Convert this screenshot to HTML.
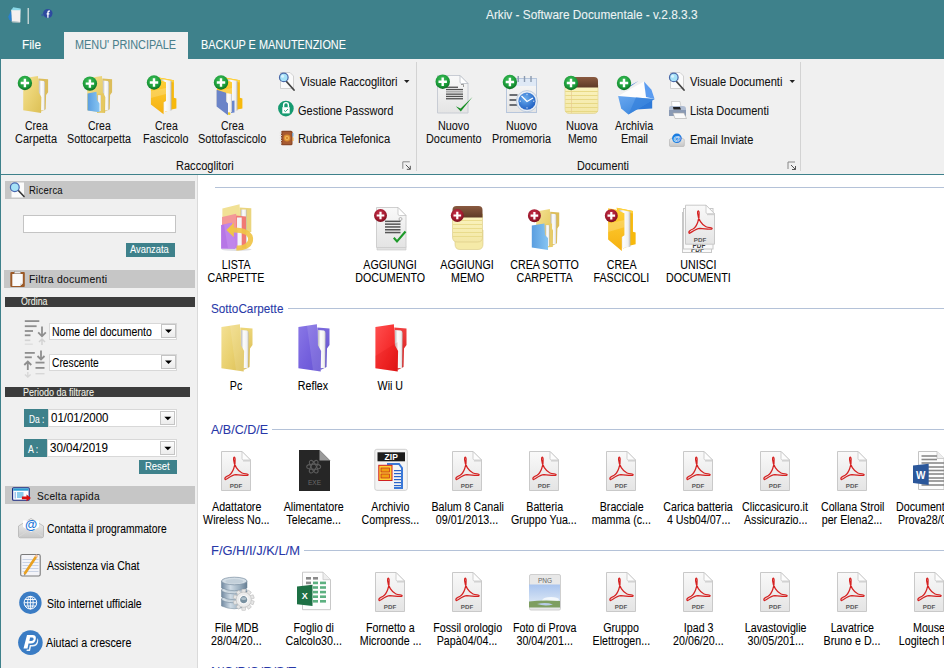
<!DOCTYPE html>
<html><head><meta charset="utf-8">
<style>
*{margin:0;padding:0;box-sizing:border-box}
html,body{width:944px;height:668px;overflow:hidden;background:#fff}
body{position:relative;font-family:"Liberation Sans",sans-serif}
.a{position:absolute}
.t{position:absolute;white-space:nowrap;-webkit-text-stroke:.07px currentColor}
</style></head><body>
<div class="a" style="left:0px;top:0px;width:944px;height:59px;background:#3e818b;"></div>
<div class="a" style="left:64px;top:32px;width:124px;height:27px;background:#f0f0f0;"></div>
<div class="a" style="left:1px;top:59px;width:943px;height:115px;background:#f0f0f0;"></div>
<div class="a" style="left:0px;top:174px;width:944px;height:1px;background:#3e818b;"></div>
<div class="a" style="left:0px;top:59px;width:1px;height:609px;background:#3e818b;"></div>
<div class="a" style="left:1px;top:175px;width:196px;height:493px;background:#f0f0f0;"></div>
<div class="a" style="left:197px;top:175px;width:1px;height:493px;background:#dadada;"></div>
<div class="a" style="left:198px;top:175px;width:746px;height:493px;background:#fff;"></div>
<div class="a" style="left:416px;top:62px;width:1px;height:109px;background:#d3d3d3;"></div>
<div class="a" style="left:800px;top:62px;width:1px;height:109px;background:#d3d3d3;"></div>
<div class="a" style="left:5px;top:181px;width:190px;height:18px;background:#c6c6c6;"></div>
<div class="a" style="left:23px;top:215px;width:153px;height:18px;background:#fff;border:1px solid #c4c4c4;box-sizing:border-box"></div>
<div class="a" style="left:126px;top:243px;width:49px;height:14px;background:#3e818b;"></div>
<div class="a" style="left:4px;top:270px;width:191px;height:17.5px;background:#c6c6c6;"></div>
<div class="a" style="left:5px;top:297px;width:190px;height:9.5px;background:#3c3c3c;"></div>
<div class="a" style="left:49px;top:322.6px;width:128px;height:17px;background:#fff;border:1px solid #d8d8d8;box-sizing:border-box"></div>
<div class="a" style="left:161px;top:324px;width:15px;height:14px;background:linear-gradient(#fdfdfd,#ececec);border:1px solid #c4c4c4;box-sizing:border-box"></div>
<div class="a" style="left:49px;top:353.6px;width:128px;height:17px;background:#fff;border:1px solid #d8d8d8;box-sizing:border-box"></div>
<div class="a" style="left:161px;top:355px;width:15px;height:14px;background:linear-gradient(#fdfdfd,#ececec);border:1px solid #c4c4c4;box-sizing:border-box"></div>
<div class="a" style="left:5px;top:387px;width:185px;height:10px;background:#3c3c3c;"></div>
<div class="a" style="left:24px;top:409px;width:24px;height:18px;background:#3e818b;"></div>
<div class="a" style="left:48px;top:409px;width:128.5px;height:18px;background:#fff;border:1px solid #d8d8d8;box-sizing:border-box"></div>
<div class="a" style="left:160.3px;top:411.3px;width:15px;height:14px;background:linear-gradient(#fdfdfd,#ececec);border:1px solid #c4c4c4;box-sizing:border-box"></div>
<div class="a" style="left:24px;top:439px;width:23px;height:17.5px;background:#3e818b;"></div>
<div class="a" style="left:47px;top:439px;width:129.5px;height:17.5px;background:#fff;border:1px solid #d8d8d8;box-sizing:border-box"></div>
<div class="a" style="left:160.3px;top:441.3px;width:15px;height:14px;background:linear-gradient(#fdfdfd,#ececec);border:1px solid #c4c4c4;box-sizing:border-box"></div>
<div class="a" style="left:139px;top:460px;width:38px;height:14px;background:#3e818b;"></div>
<div class="a" style="left:5px;top:486px;width:190px;height:17.5px;background:#c6c6c6;"></div>
<div class="a" style="left:215px;top:187px;width:729px;height:1px;background:#b4c2d8;"></div>
<div class="a" style="left:288px;top:308px;width:656px;height:1px;background:#b4c2d8;"></div>
<div class="a" style="left:272px;top:429px;width:672px;height:1px;background:#b4c2d8;"></div>
<div class="a" style="left:304px;top:550px;width:640px;height:1px;background:#b4c2d8;"></div>
<svg class="a" style="left:0;top:0" width="944" height="668"><defs>
<linearGradient id="gPage" x1="0" y1="0" x2="0" y2="1"><stop offset="0" stop-color="#f9f9f9"/><stop offset="1" stop-color="#e4e4e4"/></linearGradient>
<linearGradient id="gPageH" x1="0" y1="0" x2="1" y2="0"><stop offset="0" stop-color="#ececec"/><stop offset=".5" stop-color="#fbfbfb"/><stop offset="1" stop-color="#e2e2e2"/></linearGradient>
<linearGradient id="gPaper" x1="0" y1="0" x2="1" y2="0"><stop offset="0" stop-color="#bdbdbd"/><stop offset=".35" stop-color="#fdfdfd"/><stop offset=".8" stop-color="#f0f0f0"/><stop offset="1" stop-color="#b8b8b8"/></linearGradient>
<linearGradient id="gFY" x1="0" y1="0" x2="1" y2="1"><stop offset="0" stop-color="#f4e195"/><stop offset=".5" stop-color="#ead272"/><stop offset="1" stop-color="#dcbf55"/></linearGradient>
<linearGradient id="gFYb" x1="0" y1="0" x2="0" y2="1"><stop offset="0" stop-color="#ecd679"/><stop offset="1" stop-color="#d6b54a"/></linearGradient>
<linearGradient id="gFP" x1="0" y1="0" x2="1" y2="1"><stop offset="0" stop-color="#8a78e6"/><stop offset=".5" stop-color="#7662de"/><stop offset="1" stop-color="#6552d2"/></linearGradient>
<linearGradient id="gFPb" x1="0" y1="0" x2="0" y2="1"><stop offset="0" stop-color="#7a68dc"/><stop offset="1" stop-color="#5e4ec8"/></linearGradient>
<linearGradient id="gFR" x1="0" y1="0" x2="1" y2="1"><stop offset="0" stop-color="#ff5050"/><stop offset=".6" stop-color="#f52a2a"/><stop offset="1" stop-color="#e01818"/></linearGradient>
<linearGradient id="gFRb" x1="0" y1="0" x2="0" y2="1"><stop offset="0" stop-color="#f04040"/><stop offset="1" stop-color="#d01a1a"/></linearGradient>
<linearGradient id="gFO" x1="0" y1="0" x2="0" y2="1"><stop offset="0" stop-color="#ffd23a"/><stop offset="1" stop-color="#f5b010"/></linearGradient>
<linearGradient id="gFB" x1="0" y1="0" x2="1" y2="0"><stop offset="0" stop-color="#5a9ee0"/><stop offset="1" stop-color="#86c4f2"/></linearGradient>
<radialGradient id="gGreen" cx=".45" cy=".35" r=".65"><stop offset="0" stop-color="#3fc15a"/><stop offset=".7" stop-color="#1a9a38"/><stop offset="1" stop-color="#0e6e24"/></radialGradient>
<radialGradient id="gRed" cx=".45" cy=".35" r=".65"><stop offset="0" stop-color="#c8304a"/><stop offset=".7" stop-color="#9e1a2e"/><stop offset="1" stop-color="#7a0e1e"/></radialGradient>
<linearGradient id="gMemo" x1="0" y1="0" x2="0" y2="1"><stop offset="0" stop-color="#fbf4c0"/><stop offset="1" stop-color="#f3e7a6"/></linearGradient>
<linearGradient id="gBrown" x1="0" y1="0" x2="0" y2="1"><stop offset="0" stop-color="#8a5a40"/><stop offset="1" stop-color="#5e3a26"/></linearGradient>
<radialGradient id="gClock" cx=".4" cy=".35" r=".7"><stop offset="0" stop-color="#6aaef0"/><stop offset="1" stop-color="#1d5cc0"/></radialGradient>
<linearGradient id="gSky" x1="0" y1="0" x2="0" y2="1"><stop offset="0" stop-color="#a9c4ee"/><stop offset=".7" stop-color="#d4e2f4"/><stop offset="1" stop-color="#e8eef6"/></linearGradient>
<linearGradient id="gDB" x1="0" y1="0" x2="1" y2="0"><stop offset="0" stop-color="#7088a0"/><stop offset=".35" stop-color="#d0dce6"/><stop offset=".7" stop-color="#9cb0c0"/><stop offset="1" stop-color="#667e94"/></linearGradient>

<!-- plus badges (origin = center) -->
<g id="plusG"><circle r="7.2" fill="url(#gGreen)"/><path d="M0 -4.2V4.2M-4.2 0H4.2" stroke="#fff" stroke-width="2.4"/></g>
<g id="plusR"><circle r="6.5" fill="url(#gRed)"/><path d="M0 -3.8V3.8M-3.8 0H3.8" stroke="#fff" stroke-width="2.2"/></g>

<!-- folder: origin at (216,320) frame, 42x56 -->
<g id="folderY">
 <path d="M24.3 7.5L36.5 8.4V25L34 28.5L33.5 47L28.5 49.5L24.3 49Z" fill="url(#gFYb)"/>
 <path d="M25 10L31 10.5Q32.6 11 32.6 13L32.2 48L25 48.5Z" fill="url(#gPaper)"/>
 <path d="M5.4 7.1L23.9 4.2L24.7 25.1L28.1 31L27.7 51.6L5.4 48.2Z" fill="url(#gFY)"/>
 <path d="M14 5.8L23.9 4.2L24.7 25.1L28.1 31L27.7 51.6L20 50.4Z" fill="#fff" opacity=".12"/>
</g>
<g id="folderP">
 <path d="M24.3 7.5L36.5 8.4V25L34 28.5L33.5 47L28.5 49.5L24.3 49Z" fill="url(#gFPb)"/>
 <path d="M25 10L31 10.5Q32.6 11 32.6 13L32.2 48L25 48.5Z" fill="url(#gPaper)"/>
 <path d="M5.4 7.1L23.9 4.2L24.7 25.1L28.1 31L27.7 51.6L5.4 48.2Z" fill="url(#gFP)"/>
 <path d="M14 5.8L23.9 4.2L24.7 25.1L28.1 31L27.7 51.6L20 50.4Z" fill="#fff" opacity=".12"/>
</g>
<g id="folderR">
 <path d="M24.3 7.5L36.5 8.4V25L34 28.5L33.5 47L28.5 49.5L24.3 49Z" fill="url(#gFRb)"/>
 <path d="M25 10L31 10.5Q32.6 11 32.6 13L32.2 48L25 48.5Z" fill="url(#gPaper)"/>
 <path d="M5.4 7.1L23.9 4.2L24.7 25.1L28.1 31L27.7 51.6L5.4 48.2Z" fill="url(#gFR)"/>
 <path d="M5.4 36L27.7 22V51.6L5.4 48.2Z" fill="#c00" opacity=".15"/>
</g>

<!-- PDF page: origin page top-left, 30x40 -->
<g id="pdf">
 <path d="M0.5 0.5H21L29.5 9V39.5H0.5Z" fill="url(#gPage)" stroke="#c9c9c9"/>
 <path d="M21 0.5L29.5 9H22.5Q21 9 21 7.5Z" fill="#fdfdfd" stroke="#c4c4c4" stroke-width=".8"/>
 <path d="M22 9.2H29.3L29.3 10.5L22 10.5Z" fill="#cfcfcf"/>
 <path d="M4.3 28.6C2.8 27.2 5.3 25.2 8 24.3C12 22 14.6 14 14.1 8C13.9 5.4 12.3 5.6 12.6 8.6C13 14.2 16.6 20 21 22C24 23.4 27.6 22.6 27.1 24C26.6 25.4 21 24.1 15 23.6C10 24 6 28.3 4.3 28.6Z" fill="none" stroke="#d52222" stroke-width="1.25"/>
 <text x="15" y="37.3" font-family="Liberation Sans" font-weight="bold" font-size="6.2" text-anchor="middle" fill="#5a5a5a">PDF</text>
</g>
<linearGradient id="gEnvG" x1="0" y1="0" x2="0" y2="1"><stop offset="0" stop-color="#f6f6f6"/><stop offset="1" stop-color="#c6c6c6"/></linearGradient>
</defs>
<defs>
<g id="folderRib">
 <path d="M24.3 7.5L36.5 8.4V25L34 28.5L33.5 47L28.5 49.5L24.3 49Z" fill="#dcbd5a"/>
 <path d="M25 10L31 10.5Q32.6 11 32.6 13L32.2 48L25 48.5Z" fill="url(#gPaper)"/>
 <path d="M5.4 7.1L23.9 4.2L24.7 25.1L28.1 31L27.7 51.6L5.4 48.2Z" fill="url(#gFY)"/>
</g>
<g id="fascOr">
 <path d="M14.8 5.5L29.9 8.3V25.8L32.4 26.5V36.5L27.5 37.5L21 40Z" fill="#f7b90c"/>
 <path d="M14.8 5.5L29.9 8.3V10.5L16 8Z" fill="#ffd23c"/>
 <path d="M17.2 7L27.5 9V38.6L19 40Z" fill="url(#gPaper)"/>
 <path d="M6.9 6L14 7L22 10.3V28.9L19.6 30.3V42.3L6.9 32.4Z" fill="url(#gFO)"/>
 <path d="M6.9 19L22 16V22L6.9 26Z" fill="#fff" opacity=".2"/>
</g>
<linearGradient id="gEnv" x1="0" y1="0" x2="1" y2="1"><stop offset="0" stop-color="#6aa8f0"/><stop offset="1" stop-color="#2f7ed8"/></linearGradient>
<radialGradient id="gBlueC" cx=".4" cy=".35" r=".7"><stop offset="0" stop-color="#4a94d8"/><stop offset="1" stop-color="#2a6cb0"/></radialGradient>
</defs>
<use href="#folderRib" transform="translate(18.9,72.7) scale(0.8,0.78)"/>
<use href="#plusG" x="24.9" y="83"/>
<use href="#folderRib" transform="translate(82.9,72.7) scale(0.8,0.78)"/>
<path d="M97 94L104 93.5V112.5L97 113Z" fill="#e6c860"/>
<path d="M97.5 95L101 95.3V111L97.5 111.5Z" fill="url(#gPaper)"/>
<path d="M87.6 93.5L96.5 91.8L97 100L99.5 103.5V112.2L87.6 110.6Z" fill="url(#gFB)"/>
<use href="#plusG" x="89.9" y="83.6"/>
<use href="#fascOr" x="144" y="72"/>
<use href="#plusG" x="154" y="82.5"/>
<use href="#fascOr" x="210" y="72"/>
<path d="M231 101L234.5 100.5V112.5L231 113Z" fill="#6a86cc"/>
<path d="M225.5 93L232 94V112L226 113Z" fill="url(#gPaper)"/>
<path d="M216.6 89.8L226 92.8V101.5L228 103.5V115.2L216.6 106.5Z" fill="#6b84c8"/>
<circle cx="229.2" cy="113.8" r="1.3" fill="#f0d020"/>
<use href="#plusG" x="221" y="82.5"/>
<path d="M437.5 75.5H460L468 83.5V113H437.5Z" fill="url(#gPage)" stroke="#c8ccd4"/>
<path d="M460 75.5V82Q460 83.5 461.5 83.5H468Z" fill="#fff" stroke="#b8bcc4" stroke-width=".8"/>
<path d="M461 84.5H463.5V87" fill="none" stroke="#777" stroke-width=".7"/>
<rect x="446" y="86.6" width="12" height="1.3" fill="#505050"/><rect x="446" y="88.9" width="17" height="1.3" fill="#505050"/><rect x="446" y="91.2" width="17" height="1.3" fill="#a0a0a0"/><rect x="446" y="93.5" width="17" height="1.3" fill="#505050"/><rect x="446" y="95.8" width="17" height="1.3" fill="#505050"/><rect x="446" y="98.1" width="17" height="1.3" fill="#505050"/><path d="M455.8 106.2L460.8 111.6L472.5 97L460.6 108.6Z" fill="#1a9028"/>
<use href="#plusG" x="442.7" y="81.7"/>
<rect x="506.5" y="78.5" width="30" height="34" fill="url(#gPage)" stroke="#b7c6dc"/>
<rect x="507" y="79" width="29" height="7" fill="#dfe9f6"/>
<rect x="517.5" y="76" width="1.4" height="6" fill="#8a9ab0"/>
<rect x="523.8" y="76" width="1.4" height="6" fill="#8a9ab0"/>
<rect x="530.3" y="76" width="1.4" height="6" fill="#8a9ab0"/>
<rect x="509.5" y="94" width="8" height="2" fill="#6a6e74"/>
<rect x="509.5" y="99" width="8" height="2" fill="#6a6e74"/>
<rect x="509.5" y="104" width="8" height="2" fill="#6a6e74"/>
<circle cx="527" cy="101.2" r="10.6" fill="#e8eef6" stroke="#b4c4d8" stroke-width=".8"/>
<circle cx="527" cy="101.2" r="8.6" fill="url(#gClock)"/>
<path d="M521.5 96L527 101.5L533 98" fill="none" stroke="#fff" stroke-width="1.3"/><path d="M527 93.8V95.2M527 107.2V108.6M519.6 101.2H521M533 101.2H534.4" stroke="#dfe8f6" stroke-width="1"/>
<use href="#plusG" x="509.9" y="82"/>
<path d="M565 85H598V109Q598 113.5 593.5 113.5H569.5Q565 113.5 565 109Z" fill="url(#gMemo)" stroke="#ddd08a" stroke-width=".6"/>
<rect x="565.3" y="91" width="32.4" height="0.9" fill="#e6d680"/>
<rect x="565.3" y="95" width="32.4" height="0.9" fill="#e6d680"/>
<rect x="565.3" y="99" width="32.4" height="0.9" fill="#e6d680"/>
<rect x="565.3" y="103" width="32.4" height="0.9" fill="#e6d680"/>
<rect x="565.3" y="107" width="32.4" height="0.9" fill="#e6d680"/>
<rect x="565.3" y="111" width="32.4" height="0.9" fill="#e6d680"/>
<rect x="571" y="87" width=".8" height="26" fill="#e8c890" opacity=".8"/><path d="M565 87.5V81Q565 77 569 77H594Q598 77 598 81V87.5Z" fill="url(#gBrown)"/>
<use href="#plusG" x="571" y="83"/>
<path d="M620.5 91L638.4 80.9L631 86Z" fill="#2a6fd0"/>
<path d="M618.1 96L644 81.6L651.5 89.8L654.6 99.1L630 104Z" fill="#fdfdfd"/>
<path d="M644 81.6L651.5 89.8L654.6 99.1L646 97Z" fill="#5b9cf0"/>
<path d="M621.2 101L652.2 100V108.4L628.4 110Z" fill="#2f7ad8"/>
<path d="M618.1 96L654.6 99.1L628.4 114.6L621.2 108.4Z" fill="url(#gEnv)"/>
<path d="M636 97.5L654.6 99.1L628.4 114.6Z" fill="#3580dc" opacity=".7"/>
<use href="#plusG" x="624" y="83"/>
<path d="M280.5 72.5H290L293.5 76V88.5H280.5Z" fill="#fafafa" stroke="#c8c8c8" stroke-width=".8"/><path d="M286 81L294 90" stroke="#444" stroke-width="1.8" stroke-linecap="round"/><circle cx="283.8" cy="77.4" r="4.3" fill="#a6e2f8" stroke="#4a68a8" stroke-width="1.2"/><circle cx="282.6" cy="76.2" r="1.5" fill="#e8f8ff" opacity=".8"/>
<path d="M670.5 72.5H680L683.5 76V88.5H670.5Z" fill="#fafafa" stroke="#c8c8c8" stroke-width=".8"/><path d="M676 81L684 90" stroke="#444" stroke-width="1.8" stroke-linecap="round"/><circle cx="673.8" cy="77.4" r="4.3" fill="#a6e2f8" stroke="#4a68a8" stroke-width="1.2"/><circle cx="672.6" cy="76.2" r="1.5" fill="#e8f8ff" opacity=".8"/>
<path d="M404 80H409.5L406.75 83Z" fill="#222"/>
<path d="M789.5 80H795L792.25 83Z" fill="#222"/>
<circle cx="285.9" cy="108.6" r="7.8" fill="#169a70"/>
<rect x="282.3" y="107.2" width="7.4" height="6.2" fill="#fff"/>
<path d="M283.6 107.5V105.2Q283.6 102.6 286 102.6Q288.4 102.6 288.4 105.2V107.5" fill="none" stroke="#fff" stroke-width="1.4"/>
<path d="M284 110.3L285.5 111.6L288 109" fill="none" stroke="#169a70" stroke-width=".9"/>
<rect x="281" y="130.8" width="11.5" height="14.5" rx="1.5" fill="#8a4828"/>
<rect x="282.5" y="132" width="9" height="12" rx="1" fill="#a85a30"/>
<path d="M279.8 133H282M279.8 135.5H282M279.8 138H282M279.8 140.5H282M279.8 143H282" stroke="#d8d8d8" stroke-width=".9"/>
<rect x="292.4" y="133" width="1" height="3.5" fill="#5aa8e8"/><rect x="292.4" y="137.5" width="1" height="3.5" fill="#f0a030"/>
<circle cx="287" cy="138" r="3.4" fill="#d88a30"/>
<circle cx="287" cy="138" r="1.8" fill="none" stroke="#f6c060" stroke-width=".9"/>
<path d="M671.5 101.5H680L681 107H672Z" fill="#fff" stroke="#bbb" stroke-width=".6"/>
<path d="M669 108Q669 106 671 106H683Q686 106 686 109V115H669Z" fill="#b0bdd2"/>
<path d="M673 107H680L681 109.5H673.5Z" fill="#222"/>
<path d="M669 110H686V116H669Z" fill="#8a9ab4"/>
<path d="M673 113H684L686.5 118.5H675Z" fill="#fafafa" stroke="#aaa" stroke-width=".6"/>
<path d="M669.5 139.5L676.9 135L684.3 139.5V145.5Q684.3 146.5 683.3 146.5H670.5Q669.5 146.5 669.5 145.5Z" fill="url(#gEnvG)" stroke="#b0b0b0" stroke-width=".6"/>
<circle cx="676.9" cy="138.3" r="4.8" fill="#1a7be0"/>
<text x="676.9" y="141" font-family="Liberation Sans" font-weight="bold" font-size="7.5" text-anchor="middle" fill="#fff">@</text>
<path d="M402.8 168.8V161.8H409.8" fill="none" stroke="#888" stroke-width="1"/>
<path d="M405.8 164.8L410.3 169.3M410.3 165.8V169.3H406.8" fill="none" stroke="#555" stroke-width="1"/>
<path d="M788 169V162H795" fill="none" stroke="#888" stroke-width="1"/>
<path d="M791 165L795.5 169.5M795.5 166V169.5H792" fill="none" stroke="#555" stroke-width="1"/>
<path d="M11.1 9.8L20.6 9.4L20.3 22L11.6 21.6Z" fill="#f4f0f0"/>
<path d="M13.2 7.3L20.6 8.6V10.2L11.2 10.2Z" fill="#8ad8e8"/>
<path d="M8.2 16.8L11.1 10.5L11.6 21.6L9 19.3Z" fill="#2a80d0"/>
<path d="M11.6 21.6L20.3 22L20 22.8L12.5 22.6Z" fill="#c0c8c8"/>
<rect x="27.6" y="8" width="1.2" height="16" fill="#dfe6e4"/>
<path d="M43 13.5Q43.5 9 48 9Q52.5 9.5 52.5 13.5Q52 18 47.5 18Q44 17.5 43 13.5Z" fill="#2e4aa0"/>
<circle cx="42.5" cy="15" r="1.3" fill="#3050a8" opacity=".6"/>
<path d="M47.9 17.7V12.8Q47.9 11 49.8 11M46.6 13.8H49.4" fill="none" stroke="#fff" stroke-width="1.3"/>
<path d="M11.5 182.5H24V197.5H11.5Z" fill="#fbfbfb"/>
<path d="M17 189L24 196.5" stroke="#3a3a3a" stroke-width="1.7" stroke-linecap="round"/>
<circle cx="14.8" cy="187.2" r="4.4" fill="#a6e2f8" stroke="#4a68b0" stroke-width="1.2"/>
<rect x="10.3" y="272" width="14.5" height="15" rx="1" fill="#9c5a28"/>
<path d="M12.3 274H22.8V283.5L20 286H12.3Z" fill="#fafafa"/>
<path d="M20 286L22.8 283.5H20Z" fill="#d8d8d8"/>
<rect x="14.5" y="271.3" width="6" height="2.2" fill="#e8e8e8" stroke="#999" stroke-width=".5"/>
<rect x="12.6" y="487.7" width="16.6" height="12.6" rx="1" fill="#fdfdff" stroke="#14247e" stroke-width="1.1"/>
<rect x="13.2" y="488.3" width="15.4" height="2.4" fill="#2a9ad0"/>
<rect x="14.6" y="492" width="1.2" height="6.5" fill="#8ab8e8"/>
<rect x="17" y="492" width="6.5" height="6" fill="#8cccec"/>
<path d="M21.9 496.5H26.5V494.6L31 497.9L26.5 501.2V499.3H21.9Z" fill="#d81010"/>
<rect x="24.8" y="320.20000000000005" width="14.499999999999996" height="1.8" fill="#8e8e8e"/>
<rect x="24.8" y="325.3" width="11.8" height="1.8" fill="#8e8e8e"/>
<rect x="24.8" y="330.1" width="8.2" height="1.8" fill="#8e8e8e"/>
<rect x="24.8" y="334.40000000000003" width="5.699999999999999" height="1.8" fill="#8e8e8e"/>
<path d="M42 326.5V336M38.2 332.3L42 336.3L45.8 332.3" fill="none" stroke="#8e8e8e" stroke-width="1.8"/>
<g opacity=".35"><rect x="24.8" y="339.5" width="5.5" height="1.6" fill="#a0a0a0"/><rect x="24.8" y="343.5" width="8" height="1.4" fill="#c0c0c0"/><path d="M42 345V339M39 342L42 339L45 342" fill="none" stroke="#a0a0a0" stroke-width="1.5"/></g>
<rect x="24.8" y="352" width="10" height="1.8" fill="#8e8e8e"/><rect x="24.8" y="356.4" width="7" height="1.8" fill="#8e8e8e"/>
<path d="M41 350.5V359.5M37.5 356L41 359.5L44.5 356" fill="none" stroke="#8e8e8e" stroke-width="1.8"/>
<path d="M27.8 370V361.5M24.3 365L27.8 361.5L31.3 365" fill="none" stroke="#8e8e8e" stroke-width="1.8"/>
<rect x="35.5" y="361.7" width="9" height="1.8" fill="#8e8e8e"/><rect x="35.5" y="367" width="9" height="1.8" fill="#8e8e8e"/>
<g opacity=".3"><path d="M27.8 372V377M25 374.5L27.8 377L30.6 374.5" fill="none" stroke="#a0a0a0" stroke-width="1.4"/><rect x="35.5" y="373" width="9" height="1.4" fill="#a0a0a0"/></g>
<path d="M18.5 526L31 518.5L43.5 526V536Q43.5 537.8 41.7 537.8H20.3Q18.5 537.8 18.5 536Z" fill="url(#gEnvG)" stroke="#b4b4b4" stroke-width=".8"/>
<path d="M19 536.5L31 529L43 536.5" fill="none" stroke="#d8d8d8" stroke-width=".8"/>
<path d="M23 527V520.5H39V527L31 532Z" fill="#fff"/>
<text x="31" y="529" font-family="Liberation Sans" font-weight="bold" font-size="12.5" text-anchor="middle" fill="#1a74d8">@</text>
<rect x="20.7" y="554.5" width="19.5" height="21.5" rx="1.5" fill="#f4f4f8" stroke="#7a7a7a" stroke-width="1.1"/>
<rect x="22.5" y="559" width="16" height=".7" fill="#b8c4dc"/>
<rect x="22.5" y="562" width="16" height=".7" fill="#b8c4dc"/>
<rect x="22.5" y="565" width="16" height=".7" fill="#b8c4dc"/>
<rect x="22.5" y="568" width="16" height=".7" fill="#b8c4dc"/>
<rect x="22.5" y="571" width="16" height=".7" fill="#b8c4dc"/>
<path d="M24.5 574L36.5 556" stroke="#e8a020" stroke-width="2.6"/>
<path d="M24.5 574L23.6 576L25.2 574.6Z" fill="#555"/>
<path d="M35.8 557L37.2 555" stroke="#f0c0a0" stroke-width="2.6"/>
<circle cx="30.4" cy="602.7" r="11.2" fill="#3a7cc4"/>
<circle cx="30.4" cy="602.7" r="6.3" fill="none" stroke="#fff" stroke-width="1"/>
<ellipse cx="30.4" cy="602.7" rx="2.8" ry="6.3" fill="none" stroke="#fff" stroke-width=".9"/>
<path d="M24.1 602.7H36.7M30.4 596.4V609M25 599.5H35.8M25 606H35.8" fill="none" stroke="#fff" stroke-width=".9"/>
<circle cx="30.4" cy="642.6" r="12.3" fill="#3a7cc4"/>
<path d="M27 635H32.5Q36.5 635 35.8 639Q35 643.5 30.5 643.5H28.5L27.5 648.5H23.5Z" fill="#fff"/>
<path d="M30 637.5H32.3Q33.8 637.5 33.5 639.3Q33.2 641 31.3 641H29.4Z" fill="#3a7cc4"/>
<path d="M37.5 638Q38.8 640 38 642.5Q37 646.5 32.5 646.5H31L30 651H26.5L26.8 649.5H28.8L29.8 645H32Q36 645 37 641.5Z" fill="#fff" opacity=".9"/>
<path d="M165.0 329.4H172.0L168.5 333Z" fill="#000"/>
<path d="M165.0 360.4H172.0L168.5 364Z" fill="#000"/>
<path d="M164.3 416.7H171.3L167.8 420.3Z" fill="#000"/>
<path d="M164.3 446.7H171.3L167.8 450.3Z" fill="#000"/>
<ellipse cx="236.5" cy="249.5" rx="15" ry="1.5" fill="#c8c8d0" opacity=".6"/>
<path d="M239.5 207.5L251.3 208.2V232L239.5 233Z" fill="#ead57e"/>
<path d="M240.8 209.5H246.5V248H240.8Z" fill="url(#gPaper)"/>
<path d="M222.4 208.6L239.6 204.3L240.2 222L222.4 224Z" fill="#f1e195"/>
<path d="M235.5 215.5L246 216.5V248.3H235.5Z" fill="#f07a74"/>
<path d="M237 217.5H241.7V248H237Z" fill="#f4f4f8"/>
<path d="M222 217L236.2 213.8L236.5 238L222 240Z" fill="#f39898"/>
<path d="M233 230H237.5V248.3H233Z" fill="#c080e8"/>
<path d="M221.1 225L232 222.8L233 236L235 238.5V248.8L221.1 248.8Z" fill="#b676e6"/>
<path d="M224 224.5L232 222.8L233 236L235 238.5V248.8H228Z" fill="#c690ee" opacity=".6"/>
<path d="M232 230C244 229.5 251.5 233.5 250.5 240.5C249.5 246 243 248.5 236.5 248" fill="none" stroke="#f0c448" stroke-width="5" opacity=".92"/>
<path d="M226.3 230L233.8 222.8V237.2Z" fill="#f0c448"/>
<path d="M377 246.5H406V250H377Z" fill="#e2e2e2" stroke="#c8c8c8" stroke-width=".6"/>
<path d="M376.5 207.5H398L406 215.5V247.5H376.5Z" fill="url(#gPage)" stroke="#cfcfcf"/>
<path d="M398 207.5V214Q398 215.5 399.5 215.5H406Z" fill="#fff" stroke="#bbb" stroke-width=".7"/>
<circle cx="400.5" cy="219" r="1.5" fill="none" stroke="#999" stroke-width=".7"/>
<rect x="385" y="220.6" width="15.5" height="1.5" fill="#555"/>
<rect x="385" y="223.4" width="15.5" height="1.5" fill="#555"/>
<rect x="385" y="226.2" width="15.5" height="1.5" fill="#555"/>
<rect x="385" y="229" width="15.5" height="1.5" fill="#555"/>
<rect x="385" y="231.8" width="15.5" height="1.5" fill="#555"/>
<path d="M393.8 237.8L397 241.5L405.5 231.5" fill="none" stroke="#1e9a2a" stroke-width="2.1"/>
<use href="#plusR" x="380.5" y="215.5"/>
<path d="M455 230H483V244Q483 249.5 478 249.5H460Q455 249.5 455 244Z" fill="#f5eaa8" stroke="#d8c880" stroke-width=".6"/>
<path d="M452.5 214H482.5V237Q482.5 242 477.5 242H457.5Q452.5 242 452.5 237Z" fill="url(#gMemo)" stroke="#d8c880" stroke-width=".6"/>
<rect x="453" y="220" width="29" height="0.9" fill="#e8da88"/>
<rect x="453" y="224" width="29" height="0.9" fill="#e8da88"/>
<rect x="453" y="228" width="29" height="0.9" fill="#e8da88"/>
<rect x="453" y="232" width="29" height="0.9" fill="#e8da88"/>
<rect x="453" y="236" width="29" height="0.9" fill="#e8da88"/>
<path d="M452.5 217.5V210Q452.5 206 456.5 206H478.5Q482.5 206 482.5 210V217.5Z" fill="url(#gBrown)"/>
<use href="#plusR" x="457.3" y="215.5"/>
<use href="#folderRib" transform="translate(532.2,205.7) scale(0.74,0.8)"/>
<path d="M545 224L552 223.5V247L545 247.5Z" fill="#e8cc68"/>
<path d="M545.5 225L549.5 225.3V246L545.5 246.5Z" fill="url(#gPaper)"/>
<path d="M531.8 225.5L544.5 223.6L545 235L548 238V249.9L531.8 247.5Z" fill="url(#gFB)"/>
<use href="#plusR" x="534.4" y="215.7"/>
<use href="#fascOr" transform="translate(600.65,201.2) scale(1.08,1.18)"/>
<use href="#plusR" x="611.3" y="215.7"/>
<rect x="682.5" y="212.5" width="29" height="40" fill="#fafafa" stroke="#c8c8c8"/>
<text x="697.5" y="251.5" font-family="Liberation Sans" font-weight="bold" font-size="6.4" text-anchor="middle" fill="#3a3a3a">PDF</text>
<rect x="683.5" y="208.5" width="29.5" height="40.5" fill="#fafafa" stroke="#c8c8c8"/>
<text x="699" y="248" font-family="Liberation Sans" font-weight="bold" font-size="6.4" text-anchor="middle" fill="#3a3a3a">PDF</text>
<use href="#pdf" transform="translate(685,204.7)"/>
<path d="M299 450H319.5L330 460.5V491H299Z" fill="#262626"/>
<path d="M319.5 450L330 460.5H319.5Z" fill="#9a9a9a"/>
<g fill="none" stroke="#5c5c5c" stroke-width="1.1"><ellipse cx="313.7" cy="466.7" rx="7" ry="2.6"/><ellipse cx="313.7" cy="466.7" rx="7" ry="2.6" transform="rotate(60 313.7 466.7)"/><ellipse cx="313.7" cy="466.7" rx="7" ry="2.6" transform="rotate(-60 313.7 466.7)"/></g>
<text x="314.5" y="484.5" font-family="Liberation Sans" font-size="6.5" text-anchor="middle" fill="#6a6a6a">EXE</text>
<rect x="374.8" y="449.3" width="32.5" height="41" rx="2" fill="#f4f4f4" stroke="#d0d0d0"/>
<rect x="377.5" y="452.3" width="27.5" height="9" fill="#1c1c1c"/>
<text x="391.2" y="460" font-family="Liberation Sans" font-weight="bold" font-size="8.5" text-anchor="middle" fill="#fff">ZIP</text>
<path d="M387 464H399L402 468V488H394" fill="none" stroke="#3a78d8" stroke-width="2"/>
<rect x="394" y="470" width="7" height="1.2" fill="#2a64c8"/>
<rect x="394" y="473" width="7" height="1.2" fill="#2a64c8"/>
<rect x="394" y="476" width="7" height="1.2" fill="#2a64c8"/>
<rect x="394" y="479" width="7" height="1.2" fill="#2a64c8"/>
<rect x="394" y="482" width="7" height="1.2" fill="#2a64c8"/>
<rect x="394" y="485" width="7" height="1.2" fill="#2a64c8"/>
<rect x="378.8" y="465.3" width="13.2" height="15.2" fill="#ffd030" stroke="#d02020" stroke-width="1"/>
<rect x="381" y="468" width="8.5" height="4" fill="#f0a010" stroke="#c02020" stroke-width=".7"/>
<rect x="381" y="474" width="8.5" height="4" fill="#f0a010" stroke="#c02020" stroke-width=".7"/>
<path d="M918.5 451.5H937L944 458.5V489.5H918.5Z" fill="#fdfdfd" stroke="#c4c4c4"/>
<path d="M937 451.5V458.5H944" fill="#eee" stroke="#c4c4c4" stroke-width=".8"/>
<rect x="921.5" y="455.2" width="15.5" height="1.6" fill="#8a8a8a"/>
<rect x="921.5" y="458.7" width="15.5" height="1.6" fill="#8a8a8a"/>
<rect x="921.5" y="462.2" width="22.5" height="1.6" fill="#8a8a8a"/>
<rect x="921.5" y="466.2" width="22.5" height="1.6" fill="#8a8a8a"/>
<rect x="921.5" y="469.7" width="22.5" height="1.6" fill="#8a8a8a"/>
<rect x="921.5" y="473.2" width="22.5" height="1.6" fill="#8a8a8a"/>
<rect x="921.5" y="477.2" width="22.5" height="1.6" fill="#8a8a8a"/>
<rect x="921.5" y="480.2" width="22.5" height="1.6" fill="#8a8a8a"/>
<rect x="921.5" y="484.2" width="22.5" height="1.6" fill="#8a8a8a"/>
<path d="M913 465.5L928.7 463.8V485L913 483Z" fill="#2b579a"/>
<text x="920.8" y="479" font-family="Liberation Sans" font-weight="bold" font-size="10" text-anchor="middle" fill="#fff">W</text>
<path d="M221.5 599V606Q234.3 611.5 247 606V599Z" fill="url(#gDB)" stroke="#6a8092" stroke-width=".5"/>
<ellipse cx="234.3" cy="599" rx="12.7" ry="3.8" fill="#d4dee6" stroke="#7a8ea0" stroke-width=".7"/>
<ellipse cx="234.3" cy="599.3" rx="9" ry="2.3" fill="#b8c6d2" opacity=".6"/>
<path d="M221.5 590V597Q234.3 602.5 247 597V590Z" fill="url(#gDB)" stroke="#6a8092" stroke-width=".5"/>
<ellipse cx="234.3" cy="590" rx="12.7" ry="3.8" fill="#d4dee6" stroke="#7a8ea0" stroke-width=".7"/>
<ellipse cx="234.3" cy="590.3" rx="9" ry="2.3" fill="#b8c6d2" opacity=".6"/>
<path d="M221.5 581V588Q234.3 593.5 247 588V581Z" fill="url(#gDB)" stroke="#6a8092" stroke-width=".5"/>
<ellipse cx="234.3" cy="581" rx="12.7" ry="3.8" fill="#d4dee6" stroke="#7a8ea0" stroke-width=".7"/>
<ellipse cx="234.3" cy="581.3" rx="9" ry="2.3" fill="#b8c6d2" opacity=".6"/>
<g transform="translate(243.7,599.7)"><rect x="-1.8" y="-10.5" width="3.6" height="4" fill="#e6e6e6" stroke="#b4b4b4" stroke-width=".5" transform="rotate(0)"/><rect x="-1.8" y="-10.5" width="3.6" height="4" fill="#e6e6e6" stroke="#b4b4b4" stroke-width=".5" transform="rotate(36)"/><rect x="-1.8" y="-10.5" width="3.6" height="4" fill="#e6e6e6" stroke="#b4b4b4" stroke-width=".5" transform="rotate(72)"/><rect x="-1.8" y="-10.5" width="3.6" height="4" fill="#e6e6e6" stroke="#b4b4b4" stroke-width=".5" transform="rotate(108)"/><rect x="-1.8" y="-10.5" width="3.6" height="4" fill="#e6e6e6" stroke="#b4b4b4" stroke-width=".5" transform="rotate(144)"/><rect x="-1.8" y="-10.5" width="3.6" height="4" fill="#e6e6e6" stroke="#b4b4b4" stroke-width=".5" transform="rotate(180)"/><rect x="-1.8" y="-10.5" width="3.6" height="4" fill="#e6e6e6" stroke="#b4b4b4" stroke-width=".5" transform="rotate(216)"/><rect x="-1.8" y="-10.5" width="3.6" height="4" fill="#e6e6e6" stroke="#b4b4b4" stroke-width=".5" transform="rotate(252)"/><rect x="-1.8" y="-10.5" width="3.6" height="4" fill="#e6e6e6" stroke="#b4b4b4" stroke-width=".5" transform="rotate(288)"/><rect x="-1.8" y="-10.5" width="3.6" height="4" fill="#e6e6e6" stroke="#b4b4b4" stroke-width=".5" transform="rotate(324)"/><circle r="7.6" fill="#ececec" stroke="#b8b8b8" stroke-width=".6"/><circle r="4.2" fill="#7890a0" stroke="#fafafa" stroke-width="1.2"/><ellipse cy="-1" rx="2.6" ry="1.4" fill="#c8d4dc" opacity=".7"/></g>
<path d="M302.5 572.2H323L330.5 579.7V609.7H302.5Z" fill="#fdfdfd" stroke="#c8c8c8"/>
<path d="M323 572.2V579.7H330.5" fill="#eee" stroke="#c8c8c8" stroke-width=".8"/>
<rect x="306" y="577.0" width="5" height="2.6" fill="#8a8a8a"/>
<rect x="313" y="577.0" width="5" height="2.6" fill="#8a8a8a"/>
<rect x="306" y="581.6" width="5" height="2.6" fill="#8a8a8a"/>
<rect x="313" y="581.6" width="5" height="2.6" fill="#5cb080"/>
<rect x="320" y="581.6" width="6" height="2.6" fill="#5cb080"/>
<rect x="306" y="586.2" width="5" height="2.6" fill="#7ab890"/>
<rect x="313" y="586.2" width="5" height="2.6" fill="#5cb080"/>
<rect x="320" y="586.2" width="6" height="2.6" fill="#5cb080"/>
<rect x="306" y="590.8" width="5" height="2.6" fill="#7ab890"/>
<rect x="313" y="590.8" width="5" height="2.6" fill="#5cb080"/>
<rect x="320" y="590.8" width="6" height="2.6" fill="#5cb080"/>
<rect x="306" y="595.4" width="5" height="2.6" fill="#7ab890"/>
<rect x="313" y="595.4" width="5" height="2.6" fill="#5cb080"/>
<rect x="320" y="595.4" width="6" height="2.6" fill="#5cb080"/>
<rect x="306" y="600.0" width="5" height="2.6" fill="#7ab890"/>
<rect x="313" y="600.0" width="5" height="2.6" fill="#5cb080"/>
<rect x="320" y="600.0" width="6" height="2.6" fill="#5cb080"/>
<path d="M297 586.5L312.5 584.8V606L297 604.3Z" fill="#1d7044"/>
<text x="304.8" y="599.3" font-family="Liberation Sans" font-weight="bold" font-size="9" text-anchor="middle" fill="#fff">X</text>
<rect x="529.5" y="574.5" width="31" height="35.5" rx="1.5" fill="#e8e8e8" stroke="#cfcfcf"/>
<text x="545" y="582.6" font-family="Liberation Sans" font-size="6.5" text-anchor="middle" fill="#666">PNG</text>
<rect x="529" y="584.5" width="31" height="23" fill="url(#gSky)"/>
<ellipse cx="551" cy="599.5" rx="8" ry="2.5" fill="#f4f8fc"/><ellipse cx="546" cy="600.5" rx="4" ry="1.8" fill="#eef4fa"/><path d="M529 601.5Q542 600 560 601V607.5H529Z" fill="#7e9e60"/>
<path d="M537 604Q546 602 553 604.5Q545 606.5 537 604Z" fill="#b8cce8"/>
<use href="#folderY" x="216" y="320"/>
<use href="#folderP" x="293" y="320"/>
<use href="#folderR" x="370" y="320"/>
<use href="#pdf" x="221" y="451"/>
<use href="#pdf" x="452" y="451"/>
<use href="#pdf" x="529" y="451"/>
<use href="#pdf" x="606" y="451"/>
<use href="#pdf" x="683" y="451"/>
<use href="#pdf" x="760" y="451"/>
<use href="#pdf" x="837" y="451"/>
<use href="#pdf" x="375" y="572"/>
<use href="#pdf" x="452" y="572"/>
<use href="#pdf" x="606" y="572"/>
<use href="#pdf" x="683" y="572"/>
<use href="#pdf" x="760" y="572"/>
<use href="#pdf" x="837" y="572"/>
<use href="#pdf" x="914" y="572"/>
</svg>
<div class="t" style="font-size:12px;line-height:17px;color:#eef4f4;left:486.10px;top:7.00px;transform:scaleX(0.9859);transform-origin:0 0;">Arkiv - Software Documentale - v.2.8.3.3</div>
<div class="t" style="font-size:12px;line-height:17px;color:#fff;left:22.20px;top:37.00px;transform:scaleX(0.9874);transform-origin:0 0;">File</div>
<div class="t" style="font-size:12px;line-height:17px;color:#4a7f8c;left:75.00px;top:37.00px;transform:scaleX(0.9065);transform-origin:0 0;">MENU&#x27; PRINCIPALE</div>
<div class="t" style="font-size:12px;line-height:17px;color:#fff;left:201.00px;top:37.00px;transform:scaleX(0.9073);transform-origin:0 0;">BACKUP E MANUTENZIONE</div>
<div class="t" style="font-size:12px;line-height:17px;color:#111;left:24.50px;top:118.00px;transform:scaleX(0.8764);transform-origin:0 0;">Crea</div>
<div class="t" style="font-size:12px;line-height:17px;color:#111;left:14.90px;top:131.00px;transform:scaleX(0.9124);transform-origin:0 0;">Carpetta</div>
<div class="t" style="font-size:12px;line-height:17px;color:#111;left:87.50px;top:118.00px;transform:scaleX(0.8764);transform-origin:0 0;">Crea</div>
<div class="t" style="font-size:12px;line-height:17px;color:#111;left:67.40px;top:131.00px;transform:scaleX(0.8951);transform-origin:0 0;">Sottocarpetta</div>
<div class="t" style="font-size:12px;line-height:17px;color:#111;left:154.50px;top:118.00px;transform:scaleX(0.8764);transform-origin:0 0;">Crea</div>
<div class="t" style="font-size:12px;line-height:17px;color:#111;left:142.90px;top:131.00px;transform:scaleX(0.8977);transform-origin:0 0;">Fascicolo</div>
<div class="t" style="font-size:12px;line-height:17px;color:#111;left:221.20px;top:118.00px;transform:scaleX(0.8764);transform-origin:0 0;">Crea</div>
<div class="t" style="font-size:12px;line-height:17px;color:#111;left:198.40px;top:131.00px;transform:scaleX(0.9141);transform-origin:0 0;">Sottofascicolo</div>
<div class="t" style="font-size:12px;line-height:17px;color:#111;left:300.00px;top:74.00px;transform:scaleX(0.9271);transform-origin:0 0;">Visuale Raccoglitori</div>
<div class="t" style="font-size:12px;line-height:17px;color:#111;left:298.40px;top:103.00px;transform:scaleX(0.9158);transform-origin:0 0;">Gestione Password</div>
<div class="t" style="font-size:12px;line-height:17px;color:#111;left:298.40px;top:131.00px;transform:scaleX(0.9359);transform-origin:0 0;">Rubrica Telefonica</div>
<div class="t" style="font-size:12px;line-height:17px;color:#111;left:176.20px;top:158.00px;transform:scaleX(0.9202);transform-origin:0 0;">Raccoglitori</div>
<div class="t" style="font-size:12px;line-height:17px;color:#111;left:438.40px;top:118.00px;transform:scaleX(0.9023);transform-origin:0 0;">Nuovo</div>
<div class="t" style="font-size:12px;line-height:17px;color:#111;left:425.50px;top:131.00px;transform:scaleX(0.9059);transform-origin:0 0;">Documento</div>
<div class="t" style="font-size:12px;line-height:17px;color:#111;left:505.60px;top:118.00px;transform:scaleX(0.8937);transform-origin:0 0;">Nuovo</div>
<div class="t" style="font-size:12px;line-height:17px;color:#111;left:491.80px;top:131.00px;transform:scaleX(0.9012);transform-origin:0 0;">Promemoria</div>
<div class="t" style="font-size:12px;line-height:17px;color:#111;left:566.10px;top:118.00px;transform:scaleX(0.9168);transform-origin:0 0;">Nuova</div>
<div class="t" style="font-size:12px;line-height:17px;color:#111;left:567.70px;top:131.00px;transform:scaleX(0.8727);transform-origin:0 0;">Memo</div>
<div class="t" style="font-size:12px;line-height:17px;color:#111;left:615.40px;top:118.00px;transform:scaleX(0.8925);transform-origin:0 0;">Archivia</div>
<div class="t" style="font-size:12px;line-height:17px;color:#111;left:621.20px;top:131.00px;transform:scaleX(0.8995);transform-origin:0 0;">Email</div>
<div class="t" style="font-size:12px;line-height:17px;color:#111;left:690.10px;top:74.00px;transform:scaleX(0.9254);transform-origin:0 0;">Visuale Documenti</div>
<div class="t" style="font-size:12px;line-height:17px;color:#111;left:690.40px;top:103.00px;transform:scaleX(0.9181);transform-origin:0 0;">Lista Documenti</div>
<div class="t" style="font-size:12px;line-height:17px;color:#111;left:690.40px;top:132.00px;transform:scaleX(0.9214);transform-origin:0 0;">Email Inviate</div>
<div class="t" style="font-size:12px;line-height:17px;color:#111;left:576.70px;top:158.00px;transform:scaleX(0.9048);transform-origin:0 0;">Documenti</div>
<div class="t" style="font-size:10.5px;line-height:15px;color:#111;letter-spacing:0.3px;left:28.60px;top:183.00px;transform:scaleX(0.8991);transform-origin:0 0;">Ricerca</div>
<div class="t" style="font-size:10.5px;line-height:15px;color:#fff;left:130.30px;top:242.00px;transform:scaleX(0.8877);transform-origin:0 0;">Avanzata</div>
<div class="t" style="font-size:10.5px;line-height:15px;color:#111;letter-spacing:0.3px;left:29.20px;top:272.00px;transform:scaleX(0.9862);transform-origin:0 0;">Filtra documenti</div>
<div class="t" style="font-size:10px;line-height:14px;color:#f2f2e8;left:21.20px;top:295.00px;transform:scaleX(0.8829);transform-origin:0 0;">Ordina</div>
<div class="t" style="font-size:12px;line-height:17px;color:#000;left:52.00px;top:324.00px;transform:scaleX(0.8757);transform-origin:0 0;">Nome del documento</div>
<div class="t" style="font-size:12px;line-height:17px;color:#000;left:52.00px;top:355.00px;transform:scaleX(0.8555);transform-origin:0 0;">Crescente</div>
<div class="t" style="font-size:10px;line-height:14px;color:#f2f2e8;left:23.00px;top:386.00px;transform:scaleX(0.8994);transform-origin:0 0;">Periodo da filtrare</div>
<div class="t" style="font-size:10.5px;line-height:15px;color:#fff;left:28.80px;top:412.00px;transform:scaleX(0.7994);transform-origin:0 0;">Da :</div>
<div class="t" style="font-size:12px;line-height:17px;color:#000;left:51.00px;top:410.00px;transform:scaleX(0.9573);transform-origin:0 0;">01/01/2000</div>
<div class="t" style="font-size:10.5px;line-height:15px;color:#fff;left:28.10px;top:442.00px;transform:scaleX(0.8316);transform-origin:0 0;">A :</div>
<div class="t" style="font-size:12px;line-height:17px;color:#000;left:50.00px;top:440.00px;transform:scaleX(0.9657);transform-origin:0 0;">30/04/2019</div>
<div class="t" style="font-size:10.5px;line-height:15px;color:#fff;left:145.40px;top:459.00px;transform:scaleX(0.8966);transform-origin:0 0;">Reset</div>
<div class="t" style="font-size:10.5px;line-height:15px;color:#111;letter-spacing:0.3px;left:37.20px;top:489.00px;transform:scaleX(0.9649);transform-origin:0 0;">Scelta rapida</div>
<div class="t" style="font-size:12.5px;line-height:18px;color:#000;left:47.30px;top:520.00px;transform:scaleX(0.8237);transform-origin:0 0;">Contatta il programmatore</div>
<div class="t" style="font-size:12.5px;line-height:18px;color:#000;left:46.70px;top:557.00px;transform:scaleX(0.8426);transform-origin:0 0;">Assistenza via Chat</div>
<div class="t" style="font-size:12.5px;line-height:18px;color:#000;left:47.30px;top:595.00px;transform:scaleX(0.8429);transform-origin:0 0;">Sito internet ufficiale</div>
<div class="t" style="font-size:12.5px;line-height:18px;color:#000;left:45.80px;top:634.00px;transform:scaleX(0.8595);transform-origin:0 0;">Aiutaci a crescere</div>
<div class="t" style="font-size:12px;line-height:17px;color:#000;left:219.97px;top:257.00px;transform:scaleX(0.89);transform-origin:50% 0;">LISTA</div>
<div class="t" style="font-size:12px;line-height:17px;color:#000;left:204.19px;top:270.00px;transform:scaleX(0.89);transform-origin:50% 0;">CARPETTE</div>
<div class="t" style="font-size:12px;line-height:17px;color:#000;left:360.19px;top:257.00px;transform:scaleX(0.89);transform-origin:50% 0;">AGGIUNGI</div>
<div class="t" style="font-size:12px;line-height:17px;color:#000;left:350.97px;top:270.00px;transform:scaleX(0.89);transform-origin:50% 0;">DOCUMENTO</div>
<div class="t" style="font-size:12px;line-height:17px;color:#000;left:437.19px;top:257.00px;transform:scaleX(0.89);transform-origin:50% 0;">AGGIUNGI</div>
<div class="t" style="font-size:12px;line-height:17px;color:#000;left:448.53px;top:270.00px;transform:scaleX(0.89);transform-origin:50% 0;">MEMO</div>
<div class="t" style="font-size:12px;line-height:17px;color:#000;left:505.63px;top:257.00px;transform:scaleX(0.89);transform-origin:50% 0;">CREA SOTTO</div>
<div class="t" style="font-size:12px;line-height:17px;color:#000;left:512.64px;top:270.00px;transform:scaleX(0.89);transform-origin:50% 0;">CARPETTA</div>
<div class="t" style="font-size:12px;line-height:17px;color:#000;left:604.53px;top:257.00px;transform:scaleX(0.89);transform-origin:50% 0;">CREA</div>
<div class="t" style="font-size:12px;line-height:17px;color:#000;left:589.86px;top:270.00px;transform:scaleX(0.89);transform-origin:50% 0;">FASCICOLI</div>
<div class="t" style="font-size:12px;line-height:17px;color:#000;left:677.86px;top:257.00px;transform:scaleX(0.89);transform-origin:50% 0;">UNISCI</div>
<div class="t" style="font-size:12px;line-height:17px;color:#000;left:661.86px;top:270.00px;transform:scaleX(0.89);transform-origin:50% 0;">DOCUMENTI</div>
<div class="t" style="font-size:12px;line-height:17px;color:#2838a8;left:211.00px;top:301.00px;transform:scaleX(0.9778);transform-origin:0 0;">SottoCarpette</div>
<div class="t" style="font-size:12px;line-height:17px;color:#000;left:229.19px;top:378.00px;transform:scaleX(0.89);transform-origin:50% 0;">Pc</div>
<div class="t" style="font-size:12px;line-height:17px;color:#000;left:296.19px;top:378.00px;transform:scaleX(0.89);transform-origin:50% 0;">Reflex</div>
<div class="t" style="font-size:12px;line-height:17px;color:#000;left:375.86px;top:378.00px;transform:scaleX(0.89);transform-origin:50% 0;">Wii U</div>
<div class="t" style="font-size:12px;line-height:17px;color:#2838a8;left:211.00px;top:422.00px;transform:scaleX(1.0423);transform-origin:0 0;">A/B/C/D/E</div>
<div class="t" style="font-size:12px;line-height:17px;color:#000;left:208.51px;top:499.00px;transform:scaleX(0.89);transform-origin:50% 0;">Adattatore</div>
<div class="t" style="font-size:12px;line-height:17px;color:#000;left:198.86px;top:512.00px;transform:scaleX(0.89);transform-origin:50% 0;">Wireless No...</div>
<div class="t" style="font-size:12px;line-height:17px;color:#000;left:279.51px;top:499.00px;transform:scaleX(0.89);transform-origin:50% 0;">Alimentatore</div>
<div class="t" style="font-size:12px;line-height:17px;color:#000;left:282.52px;top:512.00px;transform:scaleX(0.89);transform-origin:50% 0;">Telecame...</div>
<div class="t" style="font-size:12px;line-height:17px;color:#000;left:368.86px;top:499.00px;transform:scaleX(0.89);transform-origin:50% 0;">Archivio</div>
<div class="t" style="font-size:12px;line-height:17px;color:#000;left:357.86px;top:512.00px;transform:scaleX(0.89);transform-origin:50% 0;">Compress...</div>
<div class="t" style="font-size:12px;line-height:17px;color:#000;left:426.51px;top:499.00px;transform:scaleX(0.89);transform-origin:50% 0;">Balum 8 Canali</div>
<div class="t" style="font-size:12px;line-height:17px;color:#000;left:432.17px;top:512.00px;transform:scaleX(0.89);transform-origin:50% 0;">09/01/2013...</div>
<div class="t" style="font-size:12px;line-height:17px;color:#000;left:523.52px;top:499.00px;transform:scaleX(0.89);transform-origin:50% 0;">Batteria</div>
<div class="t" style="font-size:12px;line-height:17px;color:#000;left:507.28px;top:512.00px;transform:scaleX(0.89);transform-origin:50% 0;">Gruppo Yua...</div>
<div class="t" style="font-size:12px;line-height:17px;color:#000;left:596.52px;top:499.00px;transform:scaleX(0.89);transform-origin:50% 0;">Bracciale</div>
<div class="t" style="font-size:12px;line-height:17px;color:#000;left:587.86px;top:512.00px;transform:scaleX(0.89);transform-origin:50% 0;">mamma (c...</div>
<div class="t" style="font-size:12px;line-height:17px;color:#000;left:659.18px;top:499.00px;transform:scaleX(0.89);transform-origin:50% 0;">Carica batteria</div>
<div class="t" style="font-size:12px;line-height:17px;color:#000;left:662.50px;top:512.00px;transform:scaleX(0.89);transform-origin:50% 0;">4 Usb04/07...</div>
<div class="t" style="font-size:12px;line-height:17px;color:#000;left:738.19px;top:499.00px;transform:scaleX(0.89);transform-origin:50% 0;">Cliccasicuro.it</div>
<div class="t" style="font-size:12px;line-height:17px;color:#000;left:739.52px;top:512.00px;transform:scaleX(0.89);transform-origin:50% 0;">Assicurazio...</div>
<div class="t" style="font-size:12px;line-height:17px;color:#000;left:816.51px;top:499.00px;transform:scaleX(0.89);transform-origin:50% 0;">Collana Stroil</div>
<div class="t" style="font-size:12px;line-height:17px;color:#000;left:818.18px;top:512.00px;transform:scaleX(0.89);transform-origin:50% 0;">per Elena2...</div>
<div class="t" style="font-size:12px;line-height:17px;color:#000;left:892.18px;top:499.00px;transform:scaleX(0.89);transform-origin:50% 0;">Documento di</div>
<div class="t" style="font-size:12px;line-height:17px;color:#000;left:893.50px;top:512.00px;transform:scaleX(0.89);transform-origin:50% 0;">Prova28/04...</div>
<div class="t" style="font-size:12px;line-height:17px;color:#2838a8;left:211.00px;top:543.00px;transform:scaleX(1.0763);transform-origin:0 0;">F/G/H/I/J/K/L/M</div>
<div class="t" style="font-size:12px;line-height:17px;color:#000;left:211.53px;top:620.00px;transform:scaleX(0.89);transform-origin:50% 0;">File MDB</div>
<div class="t" style="font-size:12px;line-height:17px;color:#000;left:207.84px;top:633.00px;transform:scaleX(0.89);transform-origin:50% 0;">28/04/20...</div>
<div class="t" style="font-size:12px;line-height:17px;color:#000;left:290.52px;top:620.00px;transform:scaleX(0.89);transform-origin:50% 0;">Foglio di</div>
<div class="t" style="font-size:12px;line-height:17px;color:#000;left:281.51px;top:633.00px;transform:scaleX(0.89);transform-origin:50% 0;">Calcolo30...</div>
<div class="t" style="font-size:12px;line-height:17px;color:#000;left:362.85px;top:620.00px;transform:scaleX(0.89);transform-origin:50% 0;">Fornetto a</div>
<div class="t" style="font-size:12px;line-height:17px;color:#000;left:355.51px;top:633.00px;transform:scaleX(0.89);transform-origin:50% 0;">Microonde ...</div>
<div class="t" style="font-size:12px;line-height:17px;color:#000;left:428.51px;top:620.00px;transform:scaleX(0.89);transform-origin:50% 0;">Fossil orologio</div>
<div class="t" style="font-size:12px;line-height:17px;color:#000;left:433.17px;top:633.00px;transform:scaleX(0.89);transform-origin:50% 0;">Papà04/04...</div>
<div class="t" style="font-size:12px;line-height:17px;color:#000;left:508.51px;top:620.00px;transform:scaleX(0.89);transform-origin:50% 0;">Foto di Prova</div>
<div class="t" style="font-size:12px;line-height:17px;color:#000;left:512.50px;top:633.00px;transform:scaleX(0.89);transform-origin:50% 0;">30/04/201...</div>
<div class="t" style="font-size:12px;line-height:17px;color:#000;left:601.18px;top:620.00px;transform:scaleX(0.89);transform-origin:50% 0;">Gruppo</div>
<div class="t" style="font-size:12px;line-height:17px;color:#000;left:588.84px;top:633.00px;transform:scaleX(0.89);transform-origin:50% 0;">Elettrogen...</div>
<div class="t" style="font-size:12px;line-height:17px;color:#000;left:681.51px;top:620.00px;transform:scaleX(0.89);transform-origin:50% 0;">Ipad 3</div>
<div class="t" style="font-size:12px;line-height:17px;color:#000;left:669.84px;top:633.00px;transform:scaleX(0.89);transform-origin:50% 0;">20/06/20...</div>
<div class="t" style="font-size:12px;line-height:17px;color:#000;left:740.51px;top:620.00px;transform:scaleX(0.89);transform-origin:50% 0;">Lavastoviglie</div>
<div class="t" style="font-size:12px;line-height:17px;color:#000;left:743.50px;top:633.00px;transform:scaleX(0.89);transform-origin:50% 0;">30/05/201...</div>
<div class="t" style="font-size:12px;line-height:17px;color:#000;left:827.85px;top:620.00px;transform:scaleX(0.89);transform-origin:50% 0;">Lavatrice</div>
<div class="t" style="font-size:12px;line-height:17px;color:#000;left:820.18px;top:633.00px;transform:scaleX(0.89);transform-origin:50% 0;">Bruno e D...</div>
<div class="t" style="font-size:12px;line-height:17px;color:#000;left:911.18px;top:620.00px;transform:scaleX(0.89);transform-origin:50% 0;">Mouse</div>
<div class="t" style="font-size:12px;line-height:17px;color:#000;left:894.85px;top:633.00px;transform:scaleX(0.89);transform-origin:50% 0;">Logitech M...</div>
<div class="t" style="font-size:12px;line-height:17px;color:#2838a8;left:211.00px;top:664.00px;transform:scaleX(1.0713);transform-origin:0 0;">N/O/P/Q/R/S/T</div>
</body></html>
